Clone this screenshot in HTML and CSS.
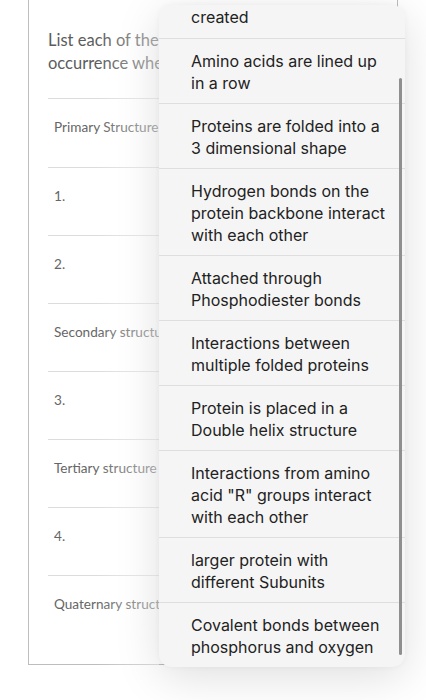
FILE: index.html
```html
<!DOCTYPE html>
<html>
<head>
<meta charset="utf-8">
<link rel="stylesheet" href="styles.css">
</head>
<body>
<div class="page">
  <div class="card">
    <div class="content">
      <p class="intro"><span>List each of the following protein structures and the</span><span>occurrence where each one takes place.</span></p>
      <div class="table">
        <div class="row">Primary Structure</div>
        <div class="row">1.</div>
        <div class="row">2.</div>
        <div class="row">Secondary structure</div>
        <div class="row">3.</div>
        <div class="row">Tertiary structure</div>
        <div class="row">4.</div>
        <div class="row">Quaternary structure</div>
      </div>
    </div>
  </div>
  <div class="fade"></div>
  <div class="menu">
    <ul class="items">
      <li class="item first">created</li>
      <li class="item">Amino acids are lined up<br>in a row</li>
      <li class="item">Proteins are folded into a<br>3 dimensional shape</li>
      <li class="item">Hydrogen bonds on the<br>protein backbone interact<br>with each other</li>
      <li class="item">Attached through<br>Phosphodiester bonds</li>
      <li class="item">Interactions between<br>multiple folded proteins</li>
      <li class="item">Protein is placed in a<br>Double helix structure</li>
      <li class="item">Interactions from amino<br>acid "R" groups interact<br>with each other</li>
      <li class="item">larger protein with<br>different Subunits</li>
      <li class="item">Covalent bonds between<br>phosphorus and oxygen</li>
    </ul>
    <div class="scrollbar"></div>
  </div>
</div>
</body>
</html>
```
FILE: styles.css
```css
html, body {
  margin: 0;
  padding: 0;
  background: #ffffff;
}
.page {
  position: relative;
  width: 426px;
  height: 700px;
  overflow: hidden;
  padding-left: 28px;
  box-sizing: border-box;
}
.card {
  width: 370px;
  height: 665px;
  box-sizing: border-box;
  border-left: 1px solid #bdbdbd;
  border-right: 1px solid #bdbdbd;
  border-bottom: 1px solid #bdbdbd;
  padding: 29px 0 0 19px;
  font-family: Lato, "Liberation Sans", sans-serif;
  color: #5c5c5c;
}
.content {
  width: 111px;
  overflow: hidden;
}
.intro {
  margin: 0 0 23px 0;
  font-size: 16.5px;
  line-height: 23px;
  display: flex;
  flex-direction: column;
  white-space: nowrap;
}
.table {
  display: flex;
  flex-direction: column;
}
.row {
  height: 68px;
  box-sizing: border-box;
  border-top: 1px solid #dcdcdc;
  padding: 19px 0 0 6px;
  font-size: 13.6px;
  line-height: 18px;
  color: #666;
  white-space: nowrap;
}
.row:first-child {
  height: 69px;
}
.fade {
  position: absolute;
  left: 95px;
  top: 0;
  width: 64px;
  height: 700px;
  background: linear-gradient(to right, rgba(255,255,255,0), rgba(255,255,255,0.5));
}
.menu {
  position: absolute;
  left: 159px;
  top: 5px;
  width: 246px;
  height: 662px;
  border-radius: 13px;
  background: #f5f5f5;
  box-shadow: 0 10px 45px rgba(0,0,0,0.13), 0 0 6px rgba(0,0,0,0.04);
  overflow: hidden;
  font-family: Inter, "Liberation Sans", sans-serif;
  color: #222;
}
.items {
  list-style: none;
  margin: 0;
  padding: 0;
}
.item {
  border-top: 1px solid #dedede;
  padding: 11px 10px 9px 32px;
  font-size: 16px;
  line-height: 22px;
}
.item.first {
  border-top: none;
  padding-top: 1px;
  padding-bottom: 10px;
}
.scrollbar {
  position: absolute;
  left: 240px;
  top: 73px;
  width: 3px;
  height: 577px;
  border-radius: 2px;
  background: #8f8f8f;
}
```
